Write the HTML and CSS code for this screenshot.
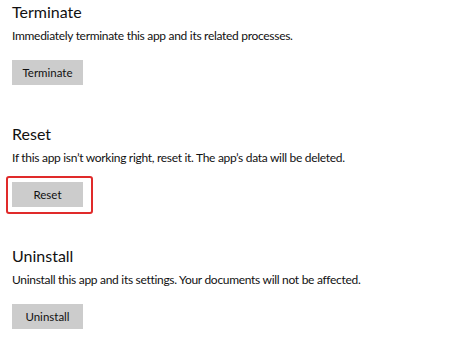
FILE: index.html
```html
<!DOCTYPE html>
<html>
<head>
    <title>App settings</title>
    <link rel="stylesheet" href="styles.css">
</head>
<body>
    <div class="page">
        <div class="section">
            <h2 class="title">Terminate</h2>
            <p class="desc">Immediately terminate this app and its related processes.</p>
            <button class="button">Terminate</button>
        </div>

        <div class="section">
            <h2 class="title">Reset</h2>
            <p class="desc">If this app isn’t working right, reset it. The app’s data will be deleted.</p>
            <span class="highlight"><button class="button">Reset</button></span>
        </div>

        <div class="section">
            <h2 class="title">Uninstall</h2>
            <p class="desc">Uninstall this app and its settings. Your documents will not be affected.</p>
            <button class="button">Uninstall</button>
        </div>
    </div>
</body>
</html>
```

FILE: styles.css
```css
body {
    margin: 0;
    background-color: #ffffff;
    font-family: Lato, "Open Sans", sans-serif;
    color: #111111;
}

.page {
    display: flex;
    flex-direction: column;
    gap: 38px;
    padding: 1px 0 0 12px;
}

.section {
    display: flex;
    flex-direction: column;
    align-items: flex-start;
}

.title {
    margin: 0;
    font-size: 16px;
    font-weight: normal;
    line-height: 22px;
}

.desc {
    margin: 4px 0 15px;
    font-size: 12px;
    letter-spacing: -0.3px;
    line-height: 18px;
}

.button {
    width: 71px;
    height: 25px;
    padding: 0;
    border: none;
    background-color: #cccccc;
    font-family: inherit;
    font-size: 11.5px;
    color: #111111;
}

.highlight {
    display: inline-block;
    margin: -6px 0 -7px -6px;
    padding: 4px 8px 5px 4px;
    border: 2px solid #e02a2a;
    border-radius: 3px;
}

.highlight .button {
    display: block;
}
```
